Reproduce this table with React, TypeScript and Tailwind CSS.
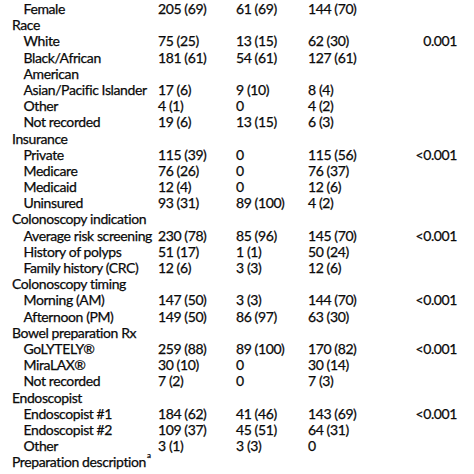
type Row = { label: string; sub?: boolean; a?: string; b?: string; c?: string; p?: string; sup?: string };

const rows: Row[] = [
  { label: 'Female', sub: true, a: '205 (69)', b: '61 (69)', c: '144 (70)' },
  { label: 'Race' },
  { label: 'White', sub: true, a: '75 (25)', b: '13 (15)', c: '62 (30)', p: '0.001' },
  { label: 'Black/African', sub: true, a: '181 (61)', b: '54 (61)', c: '127 (61)' },
  { label: 'American', sub: true },
  { label: 'Asian/Pacific Islander', sub: true, a: '17 (6)', b: '9 (10)', c: '8 (4)' },
  { label: 'Other', sub: true, a: '4 (1)', b: '0', c: '4 (2)' },
  { label: 'Not recorded', sub: true, a: '19 (6)', b: '13 (15)', c: '6 (3)' },
  { label: 'Insurance' },
  { label: 'Private', sub: true, a: '115 (39)', b: '0', c: '115 (56)', p: '<0.001' },
  { label: 'Medicare', sub: true, a: '76 (26)', b: '0', c: '76 (37)' },
  { label: 'Medicaid', sub: true, a: '12 (4)', b: '0', c: '12 (6)' },
  { label: 'Uninsured', sub: true, a: '93 (31)', b: '89 (100)', c: '4 (2)' },
  { label: 'Colonoscopy indication' },
  { label: 'Average risk screening', sub: true, a: '230 (78)', b: '85 (96)', c: '145 (70)', p: '<0.001' },
  { label: 'History of polyps', sub: true, a: '51 (17)', b: '1 (1)', c: '50 (24)' },
  { label: 'Family history (CRC)', sub: true, a: '12 (6)', b: '3 (3)', c: '12 (6)' },
  { label: 'Colonoscopy timing' },
  { label: 'Morning (AM)', sub: true, a: '147 (50)', b: '3 (3)', c: '144 (70)', p: '<0.001' },
  { label: 'Afternoon (PM)', sub: true, a: '149 (50)', b: '86 (97)', c: '63 (30)' },
  { label: 'Bowel preparation Rx' },
  { label: 'GoLYTELY®', sub: true, a: '259 (88)', b: '89 (100)', c: '170 (82)', p: '<0.001' },
  { label: 'MiraLAX®', sub: true, a: '30 (10)', b: '0', c: '30 (14)' },
  { label: 'Not recorded', sub: true, a: '7 (2)', b: '0', c: '7 (3)' },
  { label: 'Endoscopist' },
  { label: 'Endoscopist #1', sub: true, a: '184 (62)', b: '41 (46)', c: '143 (69)', p: '<0.001' },
  { label: 'Endoscopist #2', sub: true, a: '109 (37)', b: '45 (51)', c: '64 (31)' },
  { label: 'Other', sub: true, a: '3 (1)', b: '3 (3)', c: '0' },
  { label: 'Preparation description', sup: 'a' },
];

export default function App() {
  return (
    <div
      className="w-[474px] h-[474px] overflow-hidden bg-white text-[#0a0a0a] pt-[1px] pl-[12px] pr-[17px] text-[14px] leading-[16.2px] tracking-[-0.4px] [-webkit-text-stroke:0.25px_#0a0a0a]"
      style={{ fontFamily: 'Lato, "Liberation Sans", sans-serif' }}
    >
      {rows.map((r, i) => (
        <div key={i} className="grid grid-cols-[146px_78px_72px_1fr] h-[16.2px] whitespace-nowrap">
          <div className={r.sub ? 'pl-[11.5px]' : ''}>
            {r.label}
            {r.sup && <sup className="text-[8px] align-[5px] ml-[1px]">{r.sup}</sup>}
          </div>
          <div>{r.a}</div>
          <div>{r.b}</div>
          <div className="flex justify-between">
            <span>{r.c}</span>
            <span>{r.p}</span>
          </div>
        </div>
      ))}
    </div>
  );
}
